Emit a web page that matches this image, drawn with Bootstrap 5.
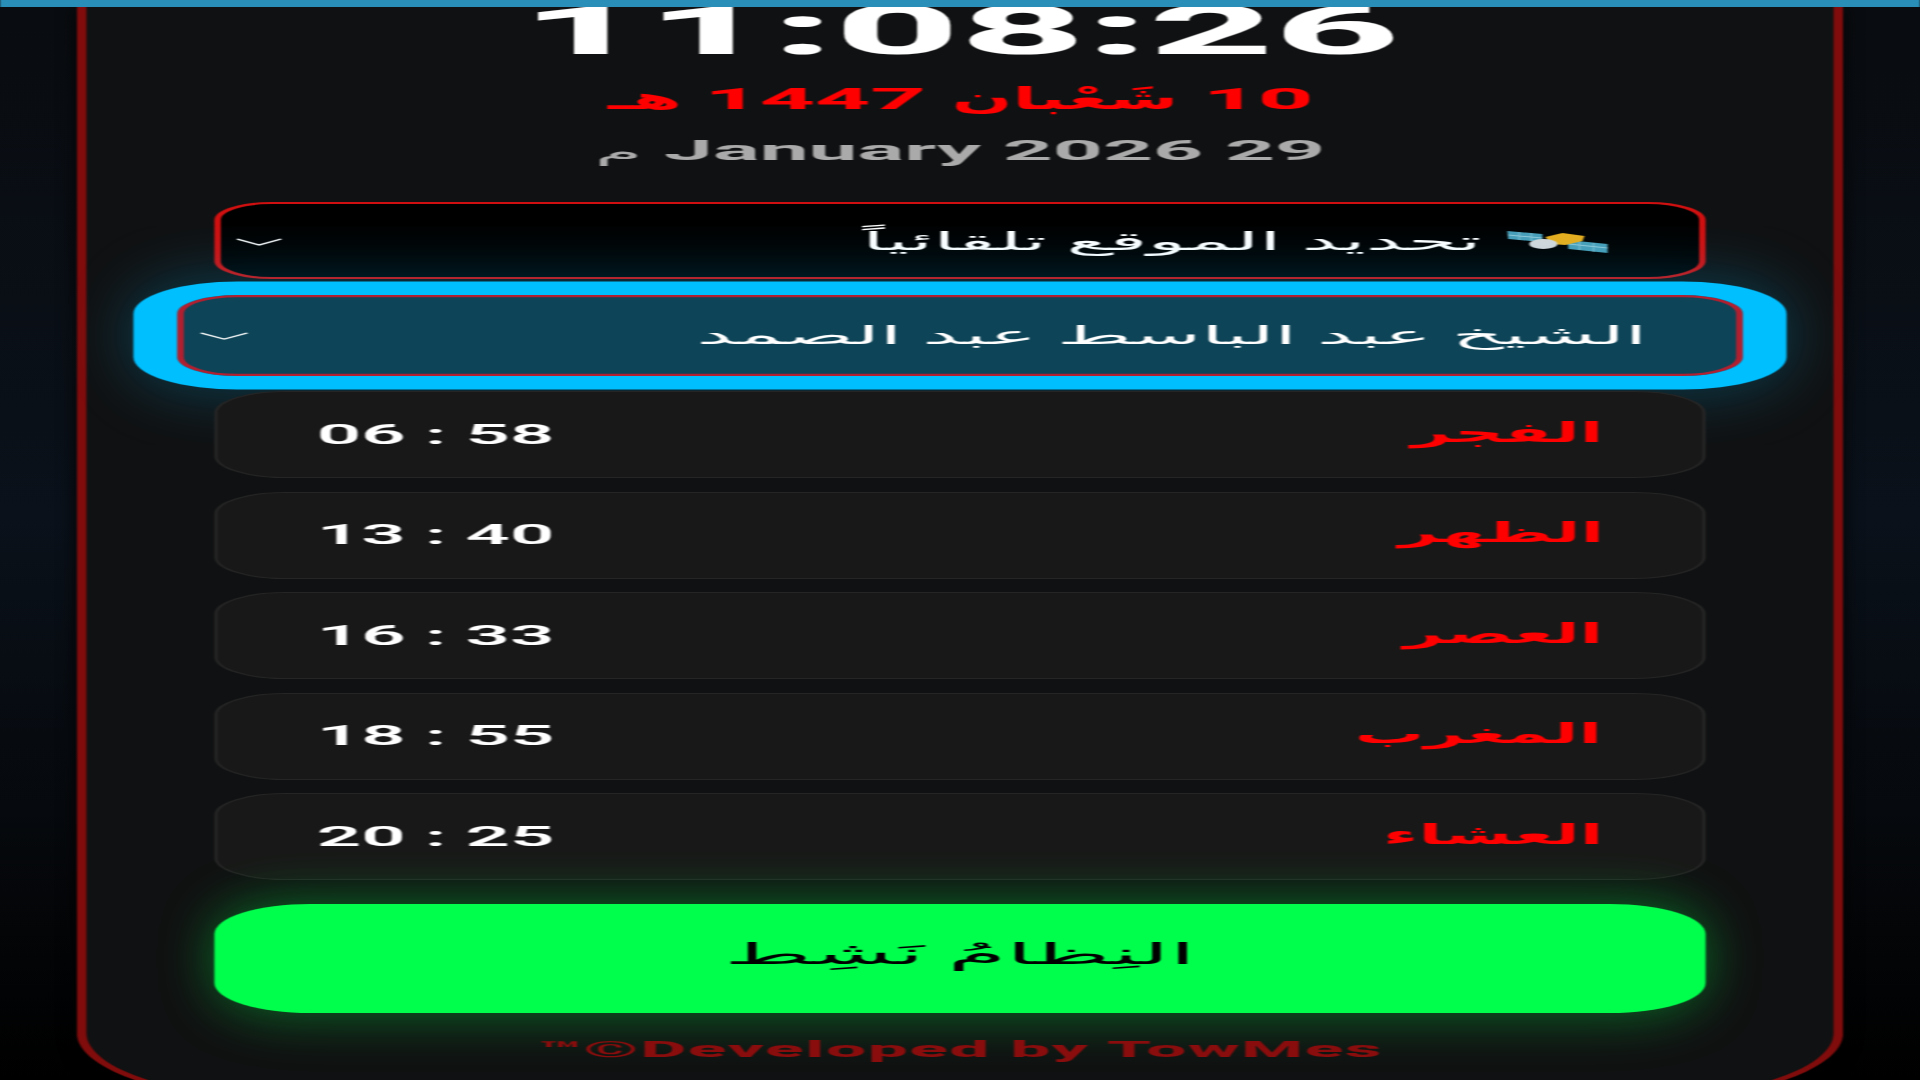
<!DOCTYPE html>
<html lang="ar" dir="rtl">
<head>
<meta charset="utf-8">
<title>Prayer times</title>
<link href="https://cdn.jsdelivr.net/npm/bootstrap@5.3.0/dist/css/bootstrap.min.css" rel="stylesheet">
<style>
html,body{margin:0;height:1080px;overflow:hidden;background:#000}
body{font-family:Roboto,"DejaVu Sans",sans-serif;background:linear-gradient(180deg,#090c10 0%,#0a111a 48%,#06090d 75%,#000 100%)}
.stage{width:600px;height:1080px;transform:scaleX(3.2);transform-origin:0 0;position:absolute;left:0;top:0;overflow:hidden;filter:blur(.4px)}
.topbar{height:7px;background:#2a8fb8;position:relative;z-index:2}
.panel{margin:0 24px;height:1096px;background:#101112;border:solid #800c0c;border-width:0 3.5px 3.5px;border-radius:0 0 70px 70px;padding:0 40px;box-shadow:0 0 10px rgba(0,0,0,.8)}
.clock{height:48px;overflow:hidden;color:#fff;font-weight:800;font-size:68px;line-height:48px;text-align:center;direction:ltr}
.hijri{color:#f00;font-weight:800;font-size:30px;line-height:36px;margin-top:26px}
.hijri-word{display:inline-block;transform:scaleX(.74);font-weight:700;margin-inline:-12px}
.hijri-suffix{display:inline-block;transform:scaleX(.74);font-weight:700;margin-inline:-4px}
.greg{color:#aaa;font-weight:700;font-size:27.3px;line-height:36px;margin-top:16.4px;margin-bottom:32px}
.greg-m{font-weight:400;font-size:24px}
.pick{height:77px;border:2px solid #d01010;border-radius:18px;background:#000;color:#fff;font-size:25px;padding:2px 28px 0 5px}
.pick-on{background:#0d4457;border-color:#b02030;outline:13.5px solid #00bfff;box-shadow:0 0 34px 14px rgba(0,191,255,.28);transform:scale(1.05);position:relative;font-size:24px;padding:1px 26.5px 0 5px}
.stack{gap:17.5px}
.times{gap:13.5px;margin-top:17.5px;position:relative;z-index:1}
.slot{height:87px;background:#181818;border:1.5px solid #252525;border-radius:22px;padding:0 31px 0 30.7px}
.slot-name{color:#f00;font-weight:700;font-size:27px;display:inline-block;transform:scaleX(.8);transform-origin:right center;padding-bottom:4px}
.slot-time{color:#fff;font-weight:600;font-size:27px;direction:ltr;display:inline-block;transform:scaleX(.9);transform-origin:left center}
.go{height:109px;margin-top:24px;background:#00ff4c;color:#000;font-size:29.5px;border-radius:30px;box-shadow:0 0 30px rgba(0,255,76,.4);padding-bottom:9px;position:relative;z-index:1}
.foot{color:#8a0d0d;font-weight:800;font-size:22px;letter-spacing:.6px;margin-top:20px;text-align:center;position:relative;z-index:2}
.chev{width:14px;height:8px;flex:none}
.sat{width:32px;height:22px;flex:none}
</style>
</head>
<body>
<div class="stage">
  <div class="topbar"></div>
  <div class="panel">
    <div class="clock">11:08:26</div>
    <div class="hijri text-center">10 <span class="hijri-word">شَعْبان</span> 1447 <span class="hijri-suffix">هـ</span></div>
    <div class="greg text-center">29 January 2026 <span class="greg-m">م</span></div>
    <div class="d-flex flex-column stack">
      <div class="pick d-flex align-items-center justify-content-between">
        <span class="d-flex align-items-center gap-2">
          <svg class="sat" viewBox="0 0 102 22" preserveAspectRatio="none">
            <path d="M0 0l35 3v8L1 8z" fill="#4a9fb8"/>
            <path d="M60 9l40 4v9l-39-4z" fill="#4a9fb8"/>
            <path d="M12 1v8M24 2v8M72 10v9M86 12v9M1 4l34 3M61 13l39 4" stroke="#8fc8d8" stroke-width="1" fill="none"/>
            <path d="M38 6l17-4 22 3-2 5-17 4-14-1z" fill="#e8ae1c"/>
            <ellipse cx="36" cy="13" rx="14" ry="5" fill="#d5d8da"/>
          </svg>
          <span>تحديد الموقع تلقائياً</span>
        </span>
        <svg class="chev" viewBox="0 0 14 8"><path d="M0 1l7 6 7-6" fill="none" stroke="#fff" stroke-width="1"/></svg>
      </div>
      <div class="pick pick-on d-flex align-items-center justify-content-between">
        <span>الشيخ عبد الباسط عبد الصمد</span>
        <svg class="chev" viewBox="0 0 14 8"><path d="M0 1l7 6 7-6" fill="none" stroke="#fff" stroke-width="1"/></svg>
      </div>
    </div>
    <div class="times d-flex flex-column">
      <div class="slot d-flex align-items-center justify-content-between"><span class="slot-name">الفجر</span><span class="slot-time">06 : 58</span></div>
      <div class="slot d-flex align-items-center justify-content-between"><span class="slot-name">الظهر</span><span class="slot-time">13 : 40</span></div>
      <div class="slot d-flex align-items-center justify-content-between"><span class="slot-name">العصر</span><span class="slot-time">16 : 33</span></div>
      <div class="slot d-flex align-items-center justify-content-between"><span class="slot-name">المغرب</span><span class="slot-time">18 : 55</span></div>
      <div class="slot d-flex align-items-center justify-content-between"><span class="slot-name">العشاء</span><span class="slot-time">20 : 25</span></div>
    </div>
    <div class="go d-flex align-items-center justify-content-center">النِظامُ نَشِط</div>
    <div class="foot" dir="ltr">™©Developed by TowMes</div>
  </div>
</div>
<script src="https://cdn.jsdelivr.net/npm/bootstrap@5.3.0/dist/js/bootstrap.bundle.min.js"></script>
</body>
</html>
